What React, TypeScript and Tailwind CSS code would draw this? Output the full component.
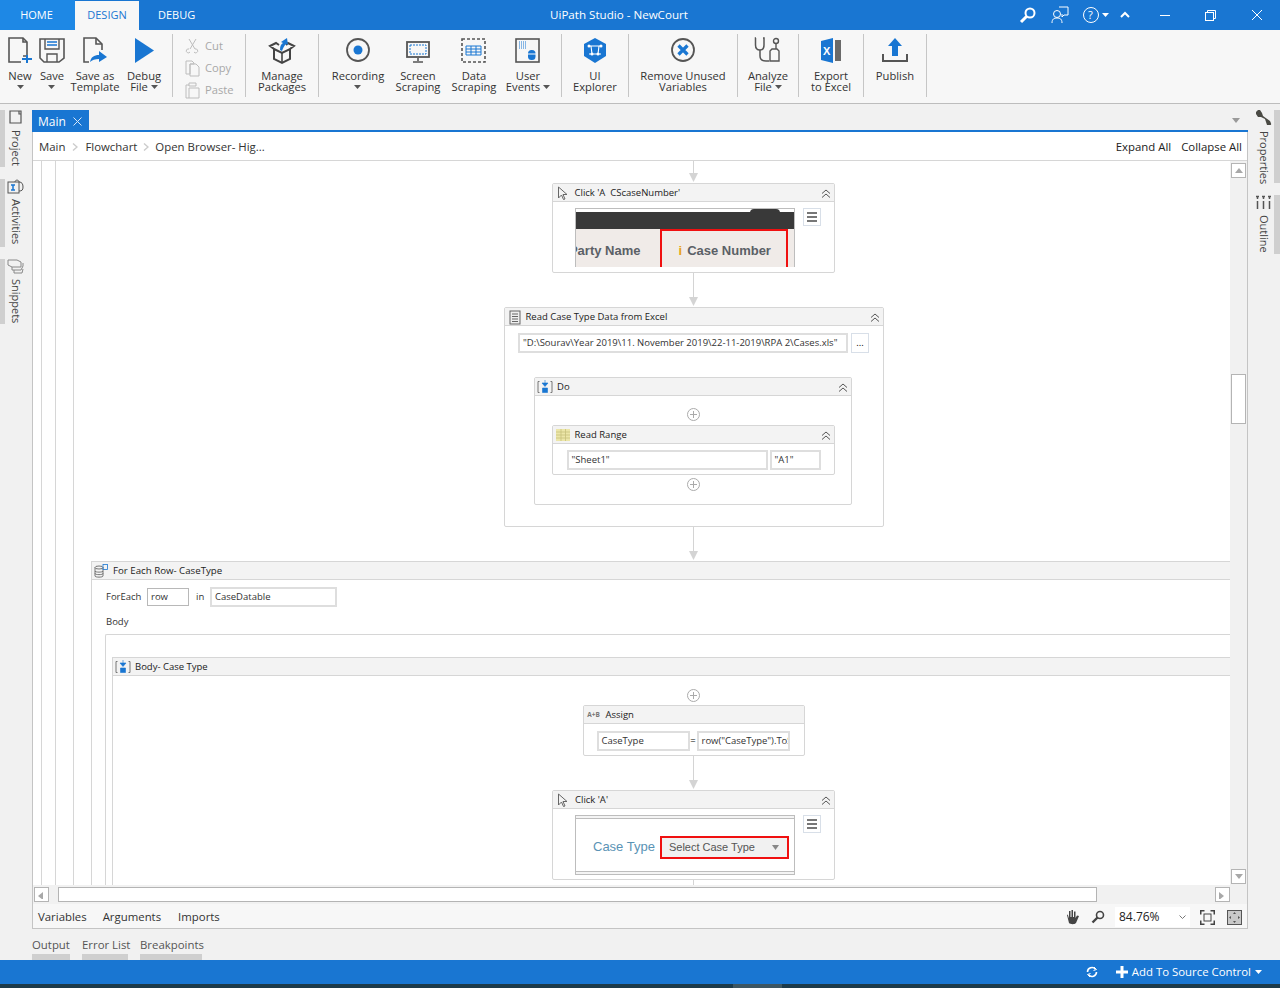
import React from 'react';

const BLUE = '#1976d2';

// ribbon icons, each drawn on a 28x28 box
const NewIcon = () => (
  <svg width="28" height="28" viewBox="0 0 28 28" fill="none">
    <path d="M17 19H21V5L17 1H3V25H15" stroke="#555" strokeWidth="1.6" />
    <path d="M17 1V5H21" stroke="#555" strokeWidth="1.6" />
    <path d="M16 22H26M21 18V26" stroke={BLUE} strokeWidth="2" />
  </svg>
);
const SaveIcon = () => (
  <svg width="28" height="28" viewBox="0 0 28 28" fill="none">
    <path d="M2 2H26V21L21 25H6L2 21Z" stroke="#555" strokeWidth="1.6" />
    <path d="M7 2V12H21V2" stroke="#555" strokeWidth="1.4" />
    <path d="M9 5H19M9 8H19" stroke={BLUE} strokeWidth="1.6" />
    <path d="M9 25V17H19V25" stroke="#555" strokeWidth="1.4" />
  </svg>
);
const SaveAsIcon = () => (
  <svg width="28" height="28" viewBox="0 0 28 28" fill="none">
    <path d="M8 25H3V1H15L21 7V13" stroke="#555" strokeWidth="1.6" />
    <path d="M15 1V7H21" stroke="#555" strokeWidth="1.6" />
    <path d="M9 25C10 20 13 18 18 18V14L26 20L18 25V22C14 22 11 23 9 25Z" fill={BLUE} />
  </svg>
);
const PlayIcon = () => (
  <svg width="28" height="28" viewBox="0 0 28 28"><path d="M5 1L24 13.500L5 26Z" fill={BLUE} /></svg>
);
const PackageIcon = () => (
  <svg width="28" height="28" viewBox="0 0 28 28" fill="none">
    <path d="M6 12L14 16L22 12V22L14 26L6 22Z" stroke="#444" strokeWidth="2" />
    <path d="M14 16V26" stroke="#444" strokeWidth="1.600" />
    <path d="M6 12L2 9L8 6L11 8M22 12L26 9L20 6L18 8" stroke="#444" strokeWidth="2" />
    <path d="M12 13C12 9 13 7 15 6L13 5L19 1L20 8L18 7C16 9 15 11 14 14Z" fill={BLUE} />
  </svg>
);
const RecordIcon = () => (
  <svg width="28" height="28" viewBox="0 0 28 28" fill="none">
    <circle cx="14" cy="13" r="11" stroke="#555" strokeWidth="1.800" />
    <circle cx="14" cy="13" r="4.500" fill={BLUE} />
  </svg>
);
const ScreenIcon = () => (
  <svg width="28" height="28" viewBox="0 0 28 28" fill="none">
    <rect x="3" y="5" width="22" height="15" stroke="#555" strokeWidth="1.800" />
    <rect x="6" y="8" width="16" height="9" stroke={BLUE} strokeWidth="1" strokeDasharray="2 1" />
    <path d="M14 21V24M9 25H19" stroke="#555" strokeWidth="1.600" />
  </svg>
);
const DataIcon = () => (
  <svg width="28" height="28" viewBox="0 0 28 28" fill="none">
    <rect x="2" y="2" width="23" height="23" stroke="#555" strokeWidth="1.600" strokeDasharray="3 2" />
    <path d="M6 9H21V18H6ZM6 12H21M6 15H21M11 9V18M16 9V18" stroke={BLUE} strokeWidth="1" />
  </svg>
);
const EventsIcon = () => (
  <svg width="28" height="28" viewBox="0 0 28 28" fill="none">
    <rect x="2" y="2" width="23" height="23" stroke="#555" strokeWidth="1.600" />
    <path d="M5 5H12M5 7H12M5 9H12M5 11H12" stroke={BLUE} strokeWidth="1" strokeDasharray="1 1" />
    <rect x="14" y="13" width="7.500" height="10" rx="3.500" fill={BLUE} />
    <path d="M14 17H22" stroke="#fff" />
  </svg>
);
const ExplorerIcon = () => (
  <svg width="28" height="28" viewBox="0 0 28 28" fill="none">
    <path d="M14 1L25 7V19L14 26L3 19V7Z" fill={BLUE} />
    <path d="M8 9H20M8 17H20M10 9L11 17M18 9L17 17" stroke="#fff" strokeWidth="1.100" />
    <circle cx="8" cy="9" r="1.500" fill="#fff" />
    <circle cx="20" cy="9" r="1.500" fill="#fff" />
    <circle cx="11" cy="17" r="1.500" fill="#fff" />
    <circle cx="17" cy="17" r="1.500" fill="#fff" />
  </svg>
);
const RemoveIcon = () => (
  <svg width="28" height="28" viewBox="0 0 28 28" fill="none">
    <circle cx="14" cy="13" r="11" stroke="#555" strokeWidth="1.800" />
    <path d="M9.500 8.500L18.500 17.500M18.500 8.500L9.500 17.500" stroke={BLUE} strokeWidth="3.200" />
  </svg>
);
const AnalyzeIcon = () => (
  <svg width="28" height="28" viewBox="0 0 28 28" fill="none">
    <path d="M2 1H1.500V8C1.500 12 4 13 6 13C8 13 10 12 10 8V1H9" stroke="#555" strokeWidth="1.500" />
    <path d="M6 13V19C6 22 8 24 12 24H15" stroke="#555" strokeWidth="1.500" />
    <circle cx="22" cy="4" r="2.500" stroke="#555" strokeWidth="1.400" />
    <path d="M22 7V12" stroke="#555" strokeWidth="1.400" />
    <path d="M18 12H23L25 14V24H16V14Z" stroke="#555" strokeWidth="1.400" />
  </svg>
);
const ExcelIcon = () => (
  <svg width="28" height="28" viewBox="0 0 28 28" fill="none">
    <rect x="18" y="3" width="6" height="21" fill="#6a6a6a" />
    <path d="M4 4L16 1V26L4 23Z" fill={BLUE} />
    <text x="6" y="18" fontSize="11" fontWeight="700" fill="#fff" fontFamily="'Liberation Sans',sans-serif">X</text>
  </svg>
);
const PublishIcon = () => (
  <svg width="28" height="28" viewBox="0 0 28 28" fill="none">
    <path d="M14 1L21 9H17V19H11V9H7Z" fill={BLUE} />
    <path d="M2 17V24H26V17" stroke="#555" strokeWidth="2" />
  </svg>
);

const Caret = ({ color = '#555' }: { color?: string }) => (
  <svg width="7" height="4" viewBox="0 0 7 4" className="shrink-0"><path d="M0 0H7L3.500 4Z" fill={color} /></svg>
);

type RibbonItem = {
  icon: React.ReactNode;
  lines: string[];
  width: string;
  caret?: 'below' | 'inline';
};

const RibbonButton = ({ item }: { item: RibbonItem }) => (
  <div className={`flex flex-col items-center shrink-0 ${item.width}`}>
    <div className="h-[28px] flex items-center justify-center mt-[7px]">{item.icon}</div>
    <div className="flex flex-col items-center mt-[5px] text-[11.2px] leading-[11px] text-[#333] whitespace-nowrap">
      <span>{item.lines[0]}</span>
      {item.lines[1] && (
        <span className="flex items-center gap-[3px]">
          {item.lines[1]}
          {item.caret === 'inline' && <Caret />}
        </span>
      )}
      {item.caret === 'below' && <span className="h-[11px] flex items-center"><Caret /></span>}
    </div>
  </div>
);

const Sep = () => <div className="w-px h-[63px] mt-[4px] bg-[#c6c6c6] shrink-0" />;

const ClipRow = ({ label, path }: { label: string; path: React.ReactNode }) => (
  <div className="flex items-center gap-[5px] h-[22px] text-[11.2px] text-[#a8a8a8]">
    <svg width="15" height="17" viewBox="0 0 15 17" fill="none" stroke="#bdbdbd" strokeWidth="1">{path}</svg>
    <span>{label}</span>
  </div>
);

const TitleBar = () => (
  <div className="h-[30px] shrink-0 flex items-stretch text-white text-[11px]" style={{ background: BLUE }}>
    <div className="w-[75px] bg-[#1e88e5] flex items-center justify-center pt-px pr-[2px]">HOME</div>
    <div className="w-[64px] mt-px bg-[#f7f7f7] text-[#1976d2] flex items-center justify-center">DESIGN</div>
    <div className="w-[411px] pl-[19px] pt-px flex items-center">DEBUG</div>
    <div className="w-[470px] flex items-center text-[11.6px]">UiPath Studio - NewCourt</div>
    {/* window controls */}
    <div className="flex items-center">
      <svg width="18" height="18" viewBox="0 0 18 18" fill="none" className="ml-[-1px]" stroke="#fff">
        <circle cx="11" cy="7" r="4.500" strokeWidth="2" />
        <path d="M7.500 10.500L2 16" strokeWidth="3" />
      </svg>
      <svg width="18" height="18" viewBox="0 0 18 18" fill="none" stroke="#fff" className="ml-[14px]">
        <path d="M8 1H17V9H13L11 11V8" />
        <circle cx="6" cy="8" r="3.500" />
        <path d="M1 17C1 13 3 12 6 12C9 12 11 13 11 17" />
      </svg>
      <svg width="18" height="18" viewBox="0 0 18 18" fill="none" className="ml-[13px]">
        <circle cx="9" cy="9" r="7.500" stroke="#fff" />
        <text x="6" y="13" fontSize="11" fill="#fff" fontFamily="'Open Sans',sans-serif">?</text>
      </svg>
      <span className="ml-[2px]"><Caret color="#fff" /></span>
      <svg width="10" height="8" viewBox="0 0 10 8" fill="none" stroke="#fff" strokeWidth="2" className="ml-[11px]">
        <path d="M1 6L5 2L9 6" />
      </svg>
      <div className="w-[10px] h-px bg-white ml-[30px]" />
      <svg width="11" height="11" viewBox="0 0 11 11" fill="none" stroke="#fff" className="ml-[35px]">
        <rect x="0.500" y="2.500" width="8" height="8" />
        <path d="M2.500 2.500V0.500H10.500V8.500H8.500" />
      </svg>
      <svg width="12" height="12" viewBox="0 0 12 12" fill="none" stroke="#fff" className="ml-[35px]">
        <path d="M1 1L11 11M11 1L1 11" />
      </svg>
    </div>
  </div>
);

const Ribbon = () => (
  <div className="h-[74px] shrink-0 bg-[#f7f7f7] border-b border-[#bdbdbd] flex items-start">
    <div className="w-[4px] shrink-0" />
    <RibbonButton item={{ icon: <NewIcon />, lines: ['New'], width: 'w-[32px]', caret: 'below' }} />
    <RibbonButton item={{ icon: <SaveIcon />, lines: ['Save'], width: 'w-[32px]', caret: 'below' }} />
    <RibbonButton item={{ icon: <SaveAsIcon />, lines: ['Save as', 'Template'], width: 'w-[54px]' }} />
    <RibbonButton item={{ icon: <PlayIcon />, lines: ['Debug', 'File'], width: 'w-[44px]', caret: 'inline' }} />
    <div className="w-[6px] shrink-0" />
    <Sep />
    <div className="w-[72px] shrink-0 pl-[12px] pt-[5px] flex flex-col">
      <ClipRow label="Cut" path={<path d="M4 1L10 11M11 1L5 11M4 11a2 2 0 1 0 1 3M10 11a2 2 0 1 1-1 3" />} />
      <ClipRow label="Copy" path={<path d="M1 1H7L9 3V4H5V14H1ZM5 4H11L14 7V16H5Z" />} />
      <ClipRow label="Paste" path={<path d="M4 3H1V16H4M4 6H14V16H4ZM4 1H11V4H4Z" />} />
    </div>
    <Sep />
    <RibbonButton item={{ icon: <PackageIcon />, lines: ['Manage', 'Packages'], width: 'w-[72px]' }} />
    <Sep />
    <div className="w-[5px] shrink-0" />
    <RibbonButton item={{ icon: <RecordIcon />, lines: ['Recording'], width: 'w-[68px]', caret: 'below' }} />
    <RibbonButton item={{ icon: <ScreenIcon />, lines: ['Screen', 'Scraping'], width: 'w-[52px]' }} />
    <RibbonButton item={{ icon: <DataIcon />, lines: ['Data', 'Scraping'], width: 'w-[60px]' }} />
    <RibbonButton item={{ icon: <EventsIcon />, lines: ['User', 'Events'], width: 'w-[48px]', caret: 'inline' }} />
    <div className="w-[9px] shrink-0" />
    <Sep />
    <RibbonButton item={{ icon: <ExplorerIcon />, lines: ['UI', 'Explorer'], width: 'w-[66px]' }} />
    <Sep />
    <RibbonButton item={{ icon: <RemoveIcon />, lines: ['Remove Unused', 'Variables'], width: 'w-[108px]' }} />
    <Sep />
    <RibbonButton item={{ icon: <AnalyzeIcon />, lines: ['Analyze', 'File'], width: 'w-[60px]', caret: 'inline' }} />
    <Sep />
    <RibbonButton item={{ icon: <ExcelIcon />, lines: ['Export', 'to Excel'], width: 'w-[64px]' }} />
    <Sep />
    <RibbonButton item={{ icon: <PublishIcon />, lines: ['Publish'], width: 'w-[62px]' }} />
    <Sep />
  </div>
);

const SideTab = ({ label, icon, bar, side }: { label: string; icon: React.ReactNode; bar: string; side: 'left' | 'right' }) => (
  <div className={`flex ${bar}`}>
    {side === 'left' && <div className="w-[5px] bg-[#cfcfcf]" />}
    <div className="flex flex-col items-center w-[21px]">
      {icon}
      <span className="[writing-mode:vertical-rl] text-[11px] leading-[12px] text-[#444] mt-[5px]">{label}</span>
    </div>
    {side === 'right' && <div className="w-[6px] bg-[#cfcfcf]" />}
  </div>
);

// workflow pieces
const Chevrons = () => (
  <svg width="10" height="9" viewBox="0 0 10 9" fill="none" stroke="#555" className="shrink-0">
    <path d="M1 4.500L5 1L9 4.500M1 8.500L5 5L9 8.500" />
  </svg>
);

const Connector = ({ h, arrow = true }: { h: string; arrow?: boolean }) => (
  <div className={`flex flex-col items-center shrink-0 ${h}`}>
    <div className="w-px flex-1 bg-[#d4d4d4]" />
    {arrow && (
      <svg width="9" height="9" viewBox="0 0 9 9" className="shrink-0 mb-[1px]"><path d="M0 0H9L4.500 9Z" fill="#d4d4d4" /></svg>
    )}
  </div>
);

const Plus = ({ className = '' }: { className?: string }) => (
  <svg width="13" height="13" viewBox="0 0 13 13" fill="none" stroke="#aaa" className={`shrink-0 ${className}`}>
    <circle cx="6.500" cy="6.500" r="6" />
    <path d="M6.500 3V10M3 6.500H10" />
  </svg>
);

const Card = ({ title, icon, width, collapse = true, gap = 'gap-[4px]', className = '', children }: {
  title: string;
  icon: React.ReactNode;
  width: string;
  collapse?: boolean;
  gap?: string;
  className?: string;
  children: React.ReactNode;
}) => (
  <div className={`${width} shrink-0 border border-[#d6d6d6] rounded-[2px] bg-white flex flex-col ${className}`}>
    <div className={`h-[18px] bg-[#f3f3f3] border-b border-[#d6d6d6] flex items-center pt-px px-[2px] pr-[3px] text-[9.5px] text-[#222] ${gap}`}>
      <span className="w-[16px] h-[14px] flex items-center justify-center shrink-0">{icon}</span>
      <span className="whitespace-pre">{title}</span>
      <span className="flex-1" />
      {collapse && <Chevrons />}
    </div>
    {children}
  </div>
);

const Field = ({ value, width, className = '' }: { value: string; width: string; className?: string }) => (
  <div className={`${width} h-[20px] border-2 border-[#dedede] bg-white text-[9.5px] text-[#333] pl-[3px] flex items-center overflow-hidden whitespace-nowrap shrink-0 ${className}`}>
    {value}
  </div>
);

const CursorIcon = () => (
  <svg width="12" height="14" viewBox="0 0 12 14" fill="none" stroke="#666"><path d="M1.500 1L10 8.500H6L8 13L6.500 13.500L4.500 9L1.500 12Z" /></svg>
);
const SequenceIcon = () => (
  <svg width="16" height="14" viewBox="0 0 16 14" fill="none">
    <path d="M2.500 1.500H1V12.500H2.500M13.500 1.500H15V12.500H13.500" stroke="#777" />
    <path d="M8 0V3M5 3H11L8 6.500ZM5.500 8H10.500V12.500H5.500Z" fill={BLUE} stroke={BLUE} strokeWidth="0.600" />
  </svg>
);
const ExcelScope = () => (
  <svg width="12" height="15" viewBox="0 0 12 15" fill="none" stroke="#666"><rect x="1" y="1" width="10" height="13" fill="#eee" /><path d="M3 4H9M3 6.500H9M3 9H9M3 11.500H9" /></svg>
);
const RangeIcon = () => (
  <svg width="14" height="13" viewBox="0 0 14 13"><rect width="14" height="12" fill="#ece6a8" /><path d="M0 3H14M0 6H14M0 9H14M5 0V12M9.500 0V12" stroke="#c8c07c" strokeWidth="0.800" /></svg>
);
const RowIcon = () => (
  <svg width="14" height="14" viewBox="0 0 14 14" fill="none" stroke="#555" strokeWidth="0.800">
    <ellipse cx="5" cy="3.500" rx="4" ry="1.500" />
    <path d="M1 3.500V12C1 13.500 9 13.500 9 12V3.500M1 7C1 8.500 9 8.500 9 7M1 9.500C1 11 9 11 9 9.500" />
    <rect x="9" y="0.500" width="4.500" height="5" stroke={BLUE} />
  </svg>
);
const Burger = () => (
  <div className="w-[18px] h-[18px] border border-[#d8dfe8] bg-white flex flex-col items-center justify-center gap-[2px] shrink-0">
    <div className="w-[10px] h-[2px] bg-[#777]" />
    <div className="w-[10px] h-[2px] bg-[#777]" />
    <div className="w-[10px] h-[2px] bg-[#777]" />
  </div>
);

const CaseNumberShot = () => (
  <div className="w-[220px] h-[59px] border-x border-[#bdbdbd] bg-[#f0ebe8] flex flex-col overflow-hidden shrink-0 [font-family:'Liberation_Sans',sans-serif]">
    <div className="h-[4px] bg-white border-t border-[#bdbdbd] shrink-0" />
    <div className="h-[17px] bg-[#393939] shrink-0 relative">
      <div className="absolute -top-[3px] left-[174px] w-[30px] h-[4px] rounded-t-[4px] bg-[#393939]" />
    </div>
    <div className="flex flex-1">
      <div className="w-[84px] flex items-center justify-end pr-[19px] pt-[5px] overflow-hidden whitespace-nowrap text-[13px] font-bold text-[#5b6066]">Party Name</div>
      <div className="w-[128px] border-2 border-b-0 border-[#f01010] flex items-center pl-[17px] pt-[4px] gap-[5px] text-[13px] font-bold text-[#5b6066] whitespace-nowrap">
        <span className="text-[#e8a317]">i</span>Case Number
      </div>
    </div>
  </div>
);

const CaseTypeShot = () => (
  <div className="w-[220px] h-[60px] border-x border-[#bdbdbd] bg-white flex flex-col shrink-0 [font-family:'Liberation_Sans',sans-serif]">
    <div className="h-[4px] border-y border-[#bdbdbd] bg-[#f4f4f4] shrink-0" />
    <div className="flex-1 flex items-center pl-[17px] gap-[5px] pt-[4px]">
      <span className="text-[13px] text-[#5a93b5] whitespace-nowrap">Case Type</span>
      <div className="w-[129px] h-[23px] border-2 border-[#f01010] bg-[#f1f1f1] flex items-center justify-between pl-[7px] pr-[8px] text-[11px] text-[#555] whitespace-nowrap">
        Select Case Type
        <svg width="7" height="5" viewBox="0 0 7 5"><path d="M0 0H7L3.500 5Z" fill="#888" /></svg>
      </div>
    </div>
    <div className="h-[4px] border-y border-[#bdbdbd] bg-[#f4f4f4] shrink-0" />
  </div>
);

const Canvas = () => (
  <div className="w-[1197px] h-[724px] bg-white overflow-hidden shrink-0">
    <div className="ml-[8px] w-[1300px] border-l border-[#d6d6d6] pl-[13px]">
      <div className="border-l border-[#d6d6d6] pl-[17px]">
        <div className="w-[1238px] border-l border-[#d6d6d6] flex flex-col items-center box-content">
          <Connector h="h-[22px]" />
          <Card title="Click 'A  CScaseNumber'" icon={<CursorIcon />} width="w-[283px]">
            <div className="flex pl-[22px] pt-[6px] pb-[5px] gap-[8px]">
              <CaseNumberShot />
              <Burger />
            </div>
          </Card>
          <Connector h="h-[34px]" />
          <Card title="Read Case Type Data from Excel" icon={<ExcelScope />} width="w-[380px]" gap="gap-[3px]" className="ml-[1px]">
            <div className="flex flex-col items-center pt-[7px] pb-[21px]">
              <div className="flex gap-[3px]">
                <Field value={'"D:\\Sourav\\Year 2019\\11. November 2019\\22-11-2019\\RPA 2\\Cases.xls"'} width="w-[330px]" />
                <div className="w-[18px] h-[20px] border border-[#d8dfe8] text-[9.5px] flex items-center justify-center">...</div>
              </div>
              <div className="h-[24px]" />
              <Card title="Do" icon={<SequenceIcon />} width="w-[318px]" className="-ml-px">
                <div className="flex flex-col items-center pt-[12px] pb-[13px]">
                  <Plus />
                  <div className="h-[4px]" />
                  <Card title="Read Range" icon={<RangeIcon />} width="w-[283px]">
                    <div className="flex pl-[14px] pt-[6px] pb-[4px] gap-[2px]">
                      <Field value={'"Sheet1"'} width="w-[201px]" />
                      <Field value={'"A1"'} width="w-[51px]" />
                    </div>
                  </Card>
                  <div className="h-[3px]" />
                  <Plus />
                </div>
              </Card>
            </div>
          </Card>
          <Connector h="h-[34px]" />
          {/* For Each Row sits wider than the viewport, its right edge is clipped */}
          <div className="w-[1204px] border-l border-t border-[#d6d6d6] flex flex-col shrink-0">
            <div className="h-[18px] bg-[#f3f3f3] border-b border-[#d6d6d6] flex items-center gap-[5px] pt-px px-[2px] text-[9.7px] text-[#222]">
              <RowIcon />
              <span>For Each Row- CaseType</span>
            </div>
            <div className="flex items-center pl-[14px] pt-[7px] text-[9.5px] text-[#333]">
              <span className="w-[41px]">ForEach</span>
              <div className="w-[42px] h-[18px] border border-[#b8b8b8] pl-[3px] flex items-center">row</div>
              <span className="ml-[7px] w-[14px]">in</span>
              <Field value="CaseDatable" width="w-[127px]" />
            </div>
            <div className="pl-[14px] pt-[8px] h-[26px] text-[9.5px] text-[#333]">Body</div>
            <div className="ml-[13px] w-[1176px] border-l border-t border-[#d6d6d6] rounded-tl-[2px] pt-[22px] pl-[6px] mt-[1px] flex flex-col">
              <div className="w-[1162px] border-l border-t border-[#d6d6d6] flex flex-col items-center shrink-0">
                <div className="self-stretch h-[18px] bg-[#f3f3f3] border-b border-[#d6d6d6] flex items-center gap-[4px] pt-px px-[2px] text-[9.5px] text-[#222]">
                  <span className="w-[16px] flex justify-center"><SequenceIcon /></span>
                  <span>Body- Case Type</span>
                </div>
                <Plus className="mt-[13px]" />
                <div className="h-[3px]" />
                <Card title="Assign" icon={<span className="text-[6.5px] font-bold text-[#777]">A+B</span>} width="w-[222px]" collapse={false}>
                  <div className="flex items-center pl-[13px] pt-[7px] pb-[4px]">
                    <Field value="CaseType" width="w-[93px]" />
                    <span className="w-[7px] text-[9.5px] text-center">=</span>
                    <Field value={'row("CaseType").ToString'} width="w-[93px]" />
                  </div>
                </Card>
                <Connector h="h-[34px]" />
                <Card title="Click 'A'" icon={<CursorIcon />} width="w-[283px]">
                  <div className="flex pl-[22px] pt-[6px] pb-[4px] gap-[8px]">
                    <CaseTypeShot />
                    <Burger />
                  </div>
                </Card>
                <Connector h="h-[40px]" arrow={false} />
              </div>
            </div>
          </div>
        </div>
      </div>
    </div>
  </div>
);

const ScrollBtn = ({ dir }: { dir: 'up' | 'down' | 'left' | 'right' }) => {
  const d = { up: 'M0 5L4 0L8 5Z', down: 'M0 0L8 0L4 5Z', left: 'M5 0V8L0 4Z', right: 'M0 0V8L5 4Z' }[dir];
  return (
    <div className="w-[15px] h-[15px] border border-[#b4b4b4] bg-white flex items-center justify-center shrink-0">
      <svg width="8" height="8" viewBox="0 0 8 8"><path d={d} fill="#a8a8a8" transform="translate(0 1)" /></svg>
    </div>
  );
};

const VScroll = () => (
  <div className="w-[17px] h-[724px] bg-[#f1f1f1] flex flex-col items-center pt-[2px] pb-px">
    <ScrollBtn dir="up" />
    <div className="h-[196px] shrink-0" />
    <div className="w-[15px] h-[50px] border border-[#b4b4b4] bg-white shrink-0" />
    <div className="flex-1" />
    <ScrollBtn dir="down" />
  </div>
);

const HScroll = () => (
  <div className="h-[19px] bg-[#f1f1f1] flex items-center pl-px pr-[17px] shrink-0">
    <ScrollBtn dir="left" />
    <div className="w-[9px] shrink-0" />
    <div className="w-[1039px] h-[15px] border border-[#b4b4b4] bg-white shrink-0" />
    <div className="flex-1" />
    <ScrollBtn dir="right" />
  </div>
);

const Document = () => (
  <div className="w-[1216px] flex flex-col shrink-0">
    {/* tab strip */}
    <div className="h-[26px] pt-[6px] flex items-stretch justify-between shrink-0">
      <div className="w-[57px] bg-[#1976d2] text-white text-[12px] flex items-center pl-[6px] pt-[3px] gap-[7px]">
        Main
        <svg width="9" height="9" viewBox="0 0 9 9" fill="none" stroke="#d8e8f8"><path d="M0.500 0.500L8.500 8.500M8.500 0.500L0.500 8.500" /></svg>
      </div>
      <svg width="8" height="5" viewBox="0 0 8 5" className="mt-[8px] mr-[8px]"><path d="M0 0H8L4 5Z" fill="#999" /></svg>
    </div>
    <div className="h-[2px] bg-[#1976d2] shrink-0" />
    <div className="flex-1 border-x border-[#c4c4c4] flex flex-col min-h-0">
      <div className="h-[29px] bg-white border-b border-[#d6d6d6] flex items-center pl-[6px] pr-[5px] text-[11.4px] text-[#333] shrink-0 pt-[2px]">
        <span>Main</span>
        <svg width="6" height="8" viewBox="0 0 6 8" fill="none" stroke="#ccc" strokeWidth="1.400" className="mx-[7px]"><path d="M1 0.500L5 4L1 7.500" /></svg>
        <span>Flowchart</span>
        <svg width="6" height="8" viewBox="0 0 6 8" fill="none" stroke="#ccc" strokeWidth="1.400" className="mx-[6px]"><path d="M1 0.500L5 4L1 7.500" /></svg>
        <span>Open Browser- Hig...</span>
        <span className="flex-1" />
        <span className="text-[#222]">Expand All</span>
        <span className="ml-[10px] text-[#222]">Collapse All</span>
      </div>
      <div className="flex shrink-0">
        <Canvas />
        <VScroll />
      </div>
      <HScroll />
      <div className="h-[24px] bg-[#f7f7f7] flex items-center pl-[5px] pr-[5px] pt-[2px] text-[11.4px] text-[#333] shrink-0">
        <span>Variables</span>
        <span className="ml-[16px]">Arguments</span>
        <span className="ml-[17px]">Imports</span>
        <span className="flex-1" />
        <svg width="16" height="16" viewBox="0 0 16 16" fill="#444" className="-ml-[2px]">
          <path d="M3 6L5 14C6 15 10 16 12 14L15 7L13 6.500L11.500 9V2.500H10V8H9V1H7.500V8H6.500V2H5V9.500L3.800 5.500Z" />
        </svg>
        <svg width="14" height="14" viewBox="0 0 14 14" fill="none" stroke="#444" className="ml-[11px]">
          <circle cx="9" cy="5" r="3.500" strokeWidth="1.600" />
          <path d="M6.500 7.500L1.500 12.500" strokeWidth="2.400" />
        </svg>
        <div className="ml-[10px] w-[75px] h-[20px] bg-white flex items-center justify-between pl-[4px] pr-[4px] text-[12px] text-[#222]">
          84.76%
          <svg width="7" height="5" viewBox="0 0 7 5" fill="none" stroke="#777"><path d="M0.500 0.500L3.500 3.500L6.500 0.500" /></svg>
        </div>
        <svg width="15" height="15" viewBox="0 0 15 15" fill="none" stroke="#444" className="ml-[10px]">
          <rect x="4" y="4" width="7" height="7" />
          <path d="M0.500 4.500V0.500H4.500M10.500 0.500H14.500V4.500M14.500 10.500V14.500H10.500M4.500 14.500H0.500V10.500" strokeWidth="2" />
        </svg>
        <div className="ml-[12px] w-[15px] h-[15px] bg-[#c8c8c8] border border-[#555] flex items-center justify-center">
          <svg width="11" height="11" viewBox="0 0 11 11"><path d="M5.500 0L7 2H4ZM5.500 11L4 9H7ZM0 5.500L2 4V7ZM11 5.500L9 7V4Z" fill="#555" /></svg>
        </div>
      </div>
    </div>
    <div className="border-t border-[#c4c4c4] h-[32px] flex gap-[12px] text-[11.4px] text-[#555] shrink-0 pt-[8px]">
      <div className="flex flex-col w-[38px]">
        <span className="leading-[16px] h-[17px] whitespace-nowrap">Output</span>
        <div className="h-[6px] bg-[#cfcfcf]" />
      </div>
      <div className="flex flex-col w-[46px]">
        <span className="leading-[16px] h-[17px] whitespace-nowrap">Error List</span>
        <div className="h-[6px] bg-[#cfcfcf]" />
      </div>
      <div className="flex flex-col w-[62px]">
        <span className="leading-[16px] h-[17px] whitespace-nowrap">Breakpoints</span>
        <div className="h-[6px] bg-[#cfcfcf]" />
      </div>
    </div>
  </div>
);

export default function App() {
  return (
    <div className="w-[1280px] h-[988px] flex flex-col overflow-hidden bg-[#f1f1f1] [font-family:'Open_Sans',sans-serif]">
      <TitleBar />
      <Ribbon />
      <div className="flex-1 min-h-0 flex">
        <div className="w-[32px] shrink-0 flex flex-col pt-[6px] gap-[12px]">
          <SideTab side="left" label="Project" bar="h-[57px]" icon={
            <svg width="13" height="15" viewBox="0 0 13 15" fill="none" stroke="#555" strokeWidth="1.200" className="shrink-0"><path d="M1 1H12V13H1Z" /><path d="M10 1V4H12" /></svg>
          } />
          <SideTab side="left" label="Activities" bar="h-[68px]" icon={
            <svg width="17" height="15" viewBox="0 0 17 15" fill="none" stroke="#555" className="shrink-0"><rect x="1" y="3" width="11" height="11" /><path d="M4 6H8M6 6V11M4 11H8" stroke={BLUE} strokeWidth="1.500" /><path d="M12 3C15 3 16 5 16 8C16 11 15 12 12 12M8 3C8 0.500 12 0.500 12 3" /></svg>
          } />
          <SideTab side="left" label="Snippets" bar="h-[65px]" icon={
            <svg width="17" height="15" viewBox="0 0 17 15" fill="none" stroke="#888" className="shrink-0"><path d="M1 1H10L14 3V8H5L1 6ZM5 8V11H14L16 7V4M7 11V14H15L16 10" /></svg>
          } />
        </div>
        <Document />
        <div className="w-[32px] shrink-0 flex flex-col pt-[6px] gap-[12px] pl-[5px]">
          <SideTab side="right" label="Properties" bar="h-[73px]" icon={
            <svg width="16" height="16" viewBox="0 0 16 16" className="shrink-0"><path d="M0 2L2 0L4 0L6 3L7 6L14 11C15 13 16 15 14 15L11 15L9 9L5 7L2 7L0 4Z" fill="#4a4a44" /></svg>
          } />
          <SideTab side="right" label="Outline" bar="h-[59px]" icon={
            <svg width="15" height="15" viewBox="0 0 15 15" className="shrink-0" fill="none" stroke="#555" strokeWidth="1.500"><path d="M0 1.500H3M6 1.500H9M12 1.500H15M1.500 1V4M7.500 1V4M13.500 1V4M1.500 6V14M7.500 6V14M13.500 6V14" /></svg>
          } />
        </div>
      </div>
      <div className="h-[24px] shrink-0 flex items-center justify-end pr-[18px] text-white text-[11.4px]" style={{ background: BLUE }}>
        <svg width="12" height="12" viewBox="0 0 12 12" fill="none" stroke="#fff" strokeWidth="1.600">
          <path d="M1.500 6A4.500 4.500 0 0 1 9.500 3.200M10.500 6A4.500 4.500 0 0 1 2.500 8.800" />
          <path d="M8 1L10.500 3.500L7.500 4.500M4 11L1.500 8.500L4.500 7.500" strokeWidth="1" />
        </svg>
        <svg width="12" height="12" viewBox="0 0 12 12" className="ml-[18px] mr-[4px]"><path d="M6 0V12M0 6H12" stroke="#fff" strokeWidth="3" /></svg>
        <span>Add To Source Control</span>
        <span className="ml-[4px]"><Caret color="#fff" /></span>
      </div>
      <div className="h-[4px] shrink-0 bg-[#1c3a4a] pl-[733px]">
        <div className="w-[49px] h-full bg-[#3d5662]" />
      </div>
    </div>
  );
}
